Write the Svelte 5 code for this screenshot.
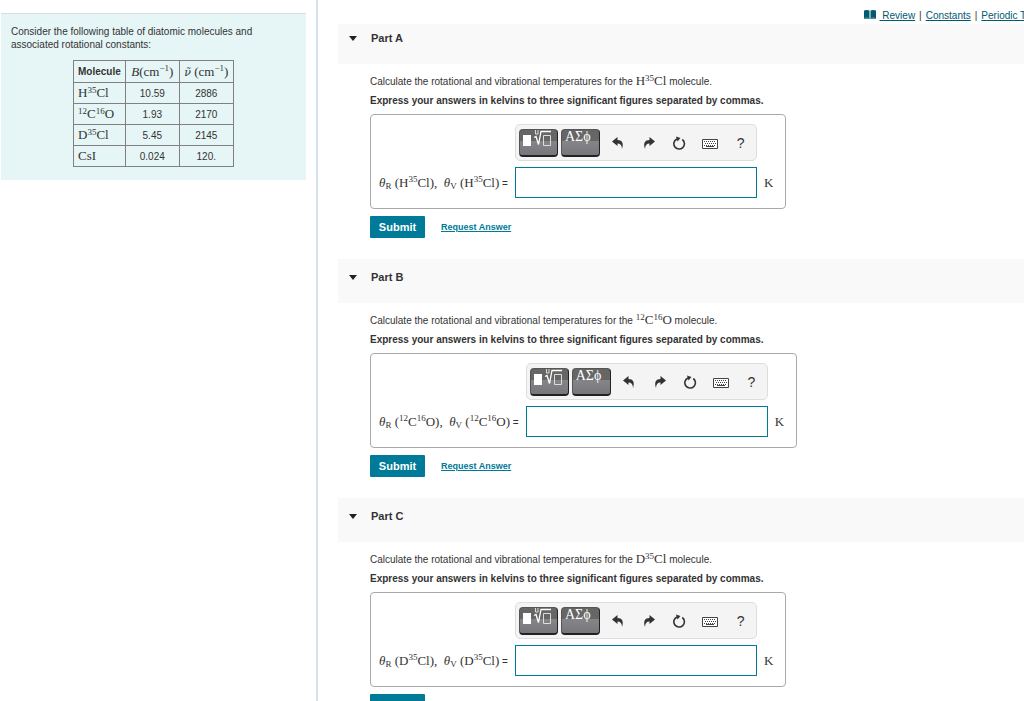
<script lang="ts">
	type Piece = { sup?: string; text?: string };
	type Row = { molecule: Piece[]; b: string; nu: string };
	type Part = { id: string; molecule: Piece[] };

	const hcl: Piece[] = [{ text: 'H' }, { sup: '35' }, { text: 'Cl' }];
	const co: Piece[] = [{ sup: '12' }, { text: 'C' }, { sup: '16' }, { text: 'O' }];
	const dcl: Piece[] = [{ text: 'D' }, { sup: '35' }, { text: 'Cl' }];

	const rows: Row[] = [
		{ molecule: hcl, b: '10.59', nu: '2886' },
		{ molecule: co, b: '1.93', nu: '2170' },
		{ molecule: dcl, b: '5.45', nu: '2145' },
		{ molecule: [{ text: 'CsI' }], b: '0.024', nu: '120.' }
	];

	const parts: Part[] = [
		{ id: 'A', molecule: hcl },
		{ id: 'B', molecule: co },
		{ id: 'C', molecule: dcl }
	];

	let open = $state<Record<string, boolean>>({ A: true, B: true, C: true });
	let answers = $state<Record<string, string>>({ A: '', B: '', C: '' });
</script>

{#snippet formula(pieces: Piece[])}
	<span class="math">{#each pieces as p}{#if p.sup}<sup>{p.sup}</sup>{:else}{p.text}{/if}{/each}</span>
{/snippet}

<div class="page">
	<aside class="side">
		<div class="intro">
			<p>Consider the following table of diatomic molecules and associated rotational constants:</p>
			<table>
				<thead>
					<tr>
						<th>Molecule</th>
						<th><span class="math"><i>B</i>(cm<sup>−1</sup>)</span></th>
						<th><span class="math"><i class="nu">ν̃</i> (cm<sup>−1</sup>)</span></th>
					</tr>
				</thead>
				<tbody>
					{#each rows as row}
						<tr>
							<td class="name">{@render formula(row.molecule)}</td>
							<td>{row.b}</td>
							<td>{row.nu}</td>
						</tr>
					{/each}
				</tbody>
			</table>
		</div>
	</aside>

	<main>
		<nav>
			<svg class="book" viewBox="0 0 12 9" aria-hidden="true">
				<path d="M0 .5Q3-.5 5.500 .5V8Q3 7.500 0 8ZM6.500 .5Q9-.5 12 .5V8Q9 7.500 6.500 8Z" fill="#005a70" />
				<path d="M0 8.500H5.500L6 9L6.500 8.500H12" fill="none" stroke="#005a70" stroke-width=".7" />
			</svg>
			<a href="#review">&nbsp;Review</a>
			<span>|</span>
			<a href="#constants">Constants</a>
			<span>|</span>
			<a href="#periodic">Periodic Table</a>
		</nav>

		{#each parts as part}
			<section>
				<h2>
					<button class="toggle" aria-expanded={open[part.id]} onclick={() => (open[part.id] = !open[part.id])}>
						<svg viewBox="0 0 8 5" aria-hidden="true"><path d="M0 0H8L4 5Z" fill="#222" /></svg>
						Part {part.id}
					</button>
				</h2>
				{#if open[part.id]}
					<div class="body">
						<p class="question">
							Calculate the rotational and vibrational temperatures for the {@render formula(part.molecule)} molecule.
						</p>
						<p class="instruction">Express your answers in kelvins to three significant figures separated by commas.</p>

						<div class="answer">
							<div class="toolbar">
								<button class="dark" aria-label="Templates">
									<svg class="root" viewBox="0 0 36 26" aria-hidden="true">
										<path d="M3 5h8v11H3z" fill="#fff" />
										<path d="M14 7.500l2-1 2.500 8L21 1.500H31" fill="none" stroke="#fff" stroke-width="1.300" />
										<path d="M15.500 0v4H18V0" fill="none" stroke="#ddd" />
										<path d="M23.500 5.500h7v10h-7z" fill="none" stroke="#ddd" />
									</svg>
								</button>
								<button class="dark symbols" aria-label="Symbols">ΑΣϕ</button>
								<button class="tool" aria-label="Undo">
									<svg width="12" height="12" viewBox="0 0 12 12">
										<path d="M0 4.500L5.500 0V3C10 3 12 6 10 12C10 8.500 8.500 6.500 5.500 6.500V9Z" fill="#333" />
									</svg>
								</button>
								<button class="tool" aria-label="Redo">
									<svg width="12" height="12" viewBox="0 0 12 12">
										<path d="M12 4.500L6.500 0V3C2 3 0 6 2 12C2 8.500 3.500 6.500 6.500 6.500V9Z" fill="#333" />
									</svg>
								</button>
								<button class="tool" aria-label="Reset">
									<svg width="14" height="14" viewBox="0 0 14 14">
										<path d="M10.300 3.500A5.300 5.300 0 1 1 5 2.900" fill="none" stroke="#333" stroke-width="1.600" />
										<path d="M4 0.500L8.500 2L5.500 5.500Z" fill="#333" />
									</svg>
								</button>
								<button class="tool" aria-label="Keyboard shortcuts">
									<svg width="16" height="16" viewBox="0 0 16 16">
										<path d="M.5 4.500h15v9H.5z" fill="#fff" stroke="#444" />
										<path
											d="M2 6.500H14M3 8.500H14M2 10.500H14"
											fill="none"
											stroke="#444"
											stroke-dasharray="1 1"
										/>
										<path d="M4 11.500H12" stroke="#444" />
									</svg>
								</button>
								<button class="tool" aria-label="Help">?</button>
							</div>
							<label for="answer-{part.id}">
								<span class="math">
									<i>θ</i><sub>R</sub> ({@render formula(part.molecule)}),&nbsp; <i>θ</i><sub>V</sub> ({@render formula(
										part.molecule
									)})
								</span>
								=
							</label>
							<input id="answer-{part.id}" type="text" bind:value={answers[part.id]} />
							<span class="math unit">K</span>
						</div>

						<div class="actions">
							<button class="submit">Submit</button>
							<a href="#answer-{part.id}">Request Answer</a>
						</div>
					</div>
				{/if}
			</section>
		{/each}
	</main>
</div>

<style>
	:global(body) {
		overflow: hidden;
		background: #fff;
	}

	.page {
		display: grid;
		grid-template-columns: 318px minmax(0, 1fr);
		height: 100vh;
		overflow: hidden;
		font: 10px/13px "Liberation Sans", Arial, sans-serif;
		color: #333;
	}

	p,
	h2 {
		margin: 0;
	}

	button {
		padding: 0;
		border: 0;
		background: none;
		color: inherit;
		font: inherit;
		cursor: pointer;
	}

	.side {
		padding: 13px 10px 0 1px;
		border-right: 2px solid #d6e1ee;
	}

	.intro {
		padding: 11px 40px 13px 10px;
		border-top: 1px solid #d9dfe0;
		background: #e6f6f6;
	}

	.math {
		font-family: "Liberation Serif", "Times New Roman", serif;
		font-size: 13px;
		font-weight: 400;
		white-space: nowrap;
	}

	.nu {
		font-family: "DejaVu Serif", serif;
		font-size: 11px;
	}

	sup,
	sub {
		position: relative;
		font-size: 9px;
		line-height: 0;
	}

	sup {
		top: 1px;
	}

	sub {
		top: -1px;
	}

	table {
		margin: 9px 0 0 62px;
		border-collapse: collapse;
	}

	th,
	td {
		min-width: 54px;
		height: 21px;
		box-sizing: border-box;
		padding: 1px 4px;
		border: 1px solid #808080;
		text-align: center;
	}

	th {
		height: 22px;
	}

	th:first-child,
	.name {
		min-width: 0;
	}

	.name {
		text-align: left;
	}

	main {
		padding-left: 20px;
		overflow: hidden;
	}

	nav {
		display: flex;
		justify-content: flex-end;
		gap: 4px;
		height: 20px;
		box-sizing: border-box;
		margin-right: -20px;
		padding-top: 9px;
		white-space: nowrap;
	}

	nav a {
		color: #005a70;
	}

	.book {
		width: 12px;
		height: 9px;
		margin-top: 1px;
	}

	section {
		padding-bottom: 21px;
	}

	h2 {
		height: 44px;
		background: #f9f9f9;
	}

	section:first-of-type h2 {
		border-top: 4px solid #fff;
		height: 40px;
	}

	section:first-of-type .toggle {
		padding-top: 7px;
	}

	.toggle {
		display: flex;
		align-items: center;
		gap: 14px;
		padding: 11px 11px 0;
		font-size: 11px;
		line-height: 14px;
		font-weight: 700;
	}

	.toggle svg {
		width: 8px;
		height: 5px;
	}

	.body {
		padding-left: 32px;
	}

	.question {
		padding-top: 8px;
		line-height: 17px;
	}

	.instruction {
		padding: 4px 0 7px;
		font-weight: 700;
	}

	.answer {
		display: inline-grid;
		grid-template-columns: auto 242px auto;
		align-items: center;
		column-gap: 7px;
		row-gap: 6px;
		padding: 9px 12px 10px 8px;
		border: 1px solid #aaa;
		border-radius: 4px;
	}

	.toolbar {
		grid-column: 2;
		display: flex;
		height: 37px;
		box-sizing: border-box;
		padding: 4px 0 0 3px;
		border: 1px solid #ddd;
		border-radius: 5px;
		background: #f4f4f4;
	}

	.dark {
		width: 39px;
		height: 28px;
		box-sizing: border-box;
		margin-right: 3px;
		border: 1px solid #555;
		border-right-color: #222;
		border-bottom: 2px solid #222;
		border-radius: 4px;
		background: linear-gradient(#666 0 45%, #858589 45%, #77777b);
		color: #fff;
		font: 14px/13px "Liberation Serif", serif;
		overflow: hidden;
	}

	.symbols {
		padding: 0 0 12px 3px;
		text-align: left;
	}

	.dark .root {
		display: block;
		width: 36px;
		height: 26px;
	}

	.tool {
		display: flex;
		flex: 1;
		align-items: center;
		justify-content: center;
		height: 28px;
		font-size: 14px;
	}

	label {
		grid-column: 1;
	}

	input {
		width: 100%;
		height: 31px;
		box-sizing: border-box;
		border: 1px solid #007a99;
		background: #fff;
		font: inherit;
	}

	.actions {
		display: flex;
		align-items: center;
		gap: 16px;
		margin-top: 7px;
	}

	.actions a {
		color: #007a99;
		font-size: 9px;
		font-weight: 700;
	}

	.submit {
		width: 55px;
		height: 22px;
		border-radius: 1px;
		background: #007a99;
		color: #fff;
		font-size: 11px;
		font-weight: 700;
	}
</style>
